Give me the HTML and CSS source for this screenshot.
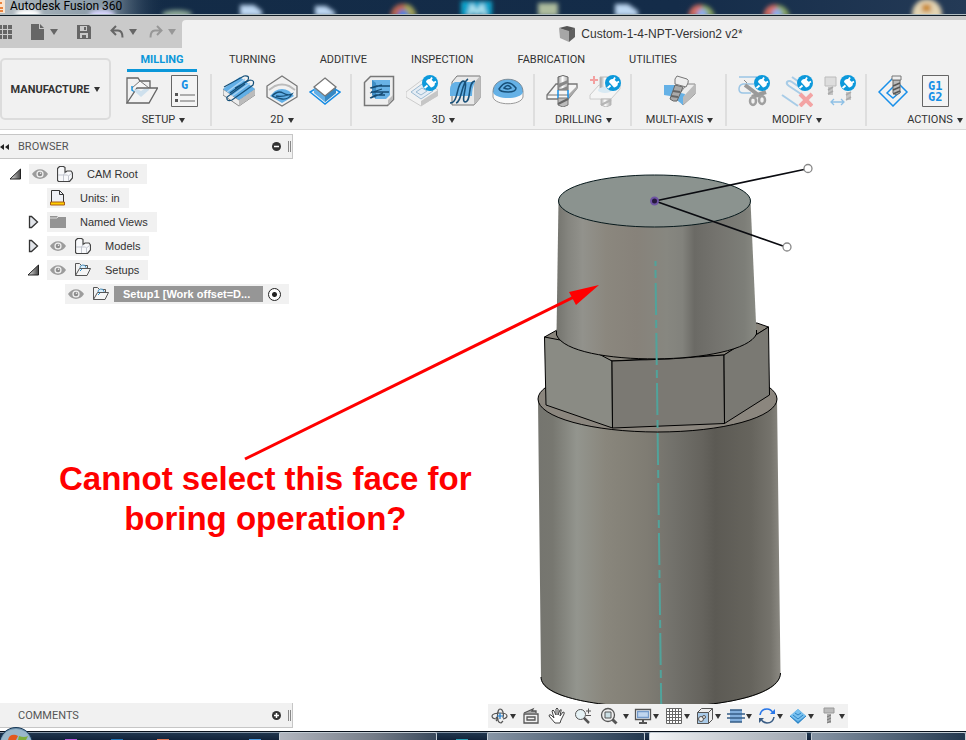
FILE: index.html
```html
<!DOCTYPE html>
<html lang="en">
<head>
	<meta charset="UTF-8">
	<meta name="viewport" content="width=device-width, initial-scale=1.0">
	<title>Autodesk Fusion 360</title>
	<link rel="stylesheet" href="styles.css">
</head>
<body>

<!-- shared symbols -->
<svg class="defs" width="0" height="0">
	<symbol id="plug" viewBox="0 0 16 16">
		<circle cx="8" cy="8" r="8" fill="#0d99db"/>
		<path d="M2.500 13l3-2.500" stroke="#fff" stroke-width="2"/>
		<path d="M4 7l5 5.500c3-.5 4.500-2.500 3.500-5L8.500 4C6 3.500 4 5 4 7z" fill="#fff"/>
		<path d="M8.500 5l1.500-2.500M11.500 8l2.500-1.500" stroke="#fff" stroke-width="1.800"/>
	</symbol>
	<symbol id="eye" viewBox="0 0 16 16">
		<path d="M0 8c4-6.500 12-6.500 16 0c-4 6.500-12 6.500-16 0z" fill="#9c9c9c"/>
		<circle cx="8" cy="8" r="3.600" fill="#f1f1f1"/>
		<circle cx="8" cy="8" r="2.300" fill="#8c8c8c"/>
		<circle cx="8.500" cy="7.300" r=".8" fill="#eee"/>
	</symbol>
	<symbol id="cubes" viewBox="0 0 16 16">
		<path d="M.5 2.500L2.500.5h4l1.500 1v5l2-1.500h4l1.500 2V12l-3 3.500H1.500l-1-1z" fill="#f8f9fb" stroke="#444" stroke-width="1.200"/>
		<path d="M1 9h5.500v6M6.500 9L8 6.500M6.500 9h4l1 1v5M11.500 10l3.500-3" fill="none" stroke="#c3c7d0"/>
	</symbol>
	<symbol id="setup" viewBox="0 0 16 16">
		<path d="M.5 13.500v-12h4l2 2h6v3" fill="none" stroke="#555"/>
		<path d="M5 6.500a3 3 0 0 1 6-1l1 1" fill="#dceefa" stroke="#4b91bd"/>
		<path d="M.5 13.500l4-7h11l-3.500 7z" fill="#f5f5f5" stroke="#555"/>
		<path d="M5 9l2-2" stroke="#2993d1"/>
	</symbol>
	<symbol id="open" viewBox="0 0 20 16">
		<path d="M1 13h10.500V3z" fill="url(#tri)" stroke="#222"/>
	</symbol>
	<symbol id="closed" viewBox="0 0 20 16">
		<path d="M2.500 2.500h2l6 5.500l-6 5.500h-2z" fill="#e2e5ea" stroke="#333" stroke-width="1.300"/>
	</symbol>
	<defs>
		<linearGradient id="tri"><stop offset="0" stop-color="#eee"/><stop offset="1" stop-color="#444"/></linearGradient>
		<linearGradient id="metal"><stop offset="0" stop-color="#999"/><stop offset=".45" stop-color="#fff"/><stop offset="1" stop-color="#aaa"/></linearGradient>
	</defs>
</svg>

<header class="titlebar">
	<svg class="wallpaper" width="100%" height="14">
		<defs>
			<filter id="soft"><feGaussianBlur stdDeviation="2"/></filter>
			<linearGradient id="haze"><stop offset="0" stop-color="#b2bbc1"/><stop offset=".65" stop-color="#8798a5"/><stop offset="1" stop-color="#18304a" stop-opacity="0"/></linearGradient>
		</defs>
		<rect width="165" height="14" fill="url(#haze)"/>
		<g filter="url(#soft)">
			<ellipse cx="28" cy="14" rx="13" ry="5" fill="#fff"/>
			<ellipse cx="102" cy="15" rx="13" ry="5" fill="#d9d6ff"/>
			<ellipse cx="177" cy="14" rx="15" ry="4" fill="#8da897"/>
			<path d="M240 16V5h14l8 6v5zM315 16V6h11l9 6v4zM615 16V4h13l10 7v5z" fill="#bdd7f2"/>
			<path d="M390 16c2-9 8-13 15-12v12z" fill="#bc654f"/><path d="M405 16V4c7 0 10 6 12 12z" fill="#a5a458"/><circle cx="403" cy="15" r="5" fill="#4a80e0"/>
			<path d="M461 1h31v15h-31z" fill="#10a3cb"/><path d="M469 16l3-10l5 7l5-7l3 10" fill="none" stroke="#c4edf4" stroke-width="3"/>
			<path d="M538 3h20v13h-20z" fill="#adbc9d"/>
			<path d="M688 16c2-10 9-13 15-11v11z" fill="#d46c60"/><path d="M702 16V5c7 0 11 5 13 11z" fill="#8eaa62"/><circle cx="702" cy="14" r="5" fill="#8faeed"/>
			<path d="M763 16c2-10 9-13 15-11v11z" fill="#d46c60"/><path d="M777 16V5c7 0 11 5 13 11z" fill="#8eaa62"/><circle cx="777" cy="14" r="5" fill="#8faeed"/>
			<circle cx="927" cy="14" r="15" fill="#e3d4b2"/><path d="M922 4h9v8h-9z" fill="#ca8b35"/>
		</g>
		<path d="M0 0h5v13H0z" fill="#fae4ce"/><path d="M0 3h2M0 8h3M0 11h3" stroke="#e8833e" stroke-width="2"/>
	</svg>
	<span class="app-name">Autodesk Fusion 360</span>
</header>

<div class="topbar">
	<div class="quick">
		<button aria-label="Data panel"><svg width="12" height="14" fill="#666"><path d="M-2 0h4v4h-4zM3 0h4v4H3zM8 0h4v4H8zM-2 5h4v4h-4zM3 5h4v4H3zM8 5h4v4H8zM-2 10h4v4h-4zM3 10h4v4H3zM8 10h4v4H8z"/></svg></button>
		<button aria-label="File"><svg width="14" height="16"><path d="M0 0h8v5h5v11H0z" fill="#666"/><path d="M9 0l4 4H9z" fill="#666"/></svg><i class="caret"></i></button>
		<button aria-label="Save"><svg width="14" height="14"><path d="M0 0h12l2 2v12H0z" fill="#666"/><path d="M3 1h7v5H3zM3 8h8v5H3z" fill="#cacaca"/><path d="M7 2h2v3H7zM5 10h4v3H5z" fill="#666"/></svg></button>
		<div class="history">
			<button aria-label="Undo"><svg width="14" height="14" fill="none" stroke="#666" stroke-width="2"><path d="M6 1L1.500 5.500L6 10M2 5.500h6q4.500 0 4.500 7"/></svg><i class="caret"></i></button>
			<button class="faded" aria-label="Redo"><svg width="14" height="14" fill="none" stroke="#666" stroke-width="2"><path d="M8 1l4.500 4.500L8 10M12 5.500H6q-4.500 0-4.500 7"/></svg><i class="caret"></i></button>
		</div>
	</div>
	<div class="doc">
		<svg width="16" height="16"><path d="M0 2l8-2l8 2l-6 4z" fill="#555"/><path d="M0 2l10 3v11L1 12z" fill="#a6a6a6"/><path d="M16 2l-6 3v11l6-5z" fill="#606060"/></svg>
		<span>Custom-1-4-NPT-Version2 v2*</span>
	</div>
</div>

<div class="ribbon">
	<button class="workspace">MANUFACTURE<i class="caret"></i></button>
	<div class="ribbon-main">
		<nav class="tabs">
			<a class="tab active" href="#">MILLING</a>
			<a class="tab" href="#">TURNING</a>
			<a class="tab" href="#">ADDITIVE</a>
			<a class="tab" href="#">INSPECTION</a>
			<a class="tab" href="#">FABRICATION</a>
			<a class="tab" href="#">UTILITIES</a>
		</nav>
		<div class="groups">
			<section class="group">
				<div class="tools">
					<button aria-label="New setup"><svg viewBox="0 0 32 32"><path d="M1 28V3h11l2 3h10v8" fill="none" stroke="#666" stroke-width="1.300"/><path d="M6 13l8-7l9 7" fill="#f8f8f8" stroke="#777"/><path d="M6 11v4l3 2" stroke="#1e96dd" fill="none" stroke-width="1.500"/><path d="M1 28l10-15h20.500L23 28z" fill="#f3f3f3" stroke="#666" stroke-width="1.300"/><path d="M7 15l8 7l8-7v-1h-5l-3 2l-4-2z" fill="#cee0ed"/></svg></button>
					<button aria-label="NC program"><svg viewBox="0 0 32 32"><path d="M2.500.5h26v31h-26z" fill="#f4f4f4" stroke="#666"/><text class="g-letter" x="12" y="14">G</text><path d="M6 18h3v3H6zM6 24h3v3H6z" fill="#555"/><path d="M11 20h15M11 26h15" stroke="#666"/></svg></button>
				</div>
				<button class="menu">SETUP<i class="caret"></i></button>
			</section>
			<section class="group">
				<div class="tools">
					<button aria-label="Face"><svg viewBox="0 0 32 32"><path d="M0 14L16 25l16-11v6L16 31L0 20z" fill="#ededed" stroke="#888"/><path d="M16 25l16-11v6L16 31z" fill="#bbb"/><path d="M0 14L17 2l15 12l-16 11z" fill="#62afe6"/><path d="M4 17L22 4M9 21L27 8" stroke="#a9d3f2" stroke-width="1.500"/><path d="M1 12L21 1q6-1 4 4L7 18M12 13L27 5q5 0 3 5L9 25q-6 2-5-3L22 9" fill="none" stroke="#144f78" stroke-width="1.200"/></svg></button>
					<button aria-label="2D adaptive clearing"><svg viewBox="0 0 32 32"><path d="M16 1l15 10v11L16 31L1 22V11z" fill="#f1f1f1" stroke="#777" stroke-width="1.300"/><path d="M3 15l6-4q7-3 14 0l6 4" fill="none" stroke="#bbb" stroke-width="2"/><path d="M4 21l5-5q7-4 14 0l5 5L16 28z" fill="#62afe6"/><path d="M6 21q6-6 11-3t9 1q-4 6-10 5t-10-3M10 21q6 1 12-1" fill="none" stroke="#174f78" stroke-width="1.300"/></svg></button>
					<button aria-label="2D contour"><svg viewBox="0 0 32 32"><path d="M1 17l15 12l15-12l-15-9z" fill="none" stroke="#148be5" stroke-width="1.500"/><path d="M5 12l11 9v6L5 18zM27 12l-11 9v6l11-9z" fill="#62afe6"/><path d="M16 21l11-9v6l-11 9z" fill="#3688c3"/><path d="M16 3l11 9l-11 9L5 12z" fill="#fff" stroke="#777" stroke-width="1.300"/></svg></button>
				</div>
				<button class="menu">2D<i class="caret"></i></button>
			</section>
			<section class="group">
				<div class="tools">
					<button aria-label="Adaptive clearing"><svg viewBox="0 0 32 32"><path d="M1.500 7.500l6-6h23v23l-6 6h-23z" fill="#eee" stroke="#777" stroke-width="1.500"/><path d="M25 30V25l5-5v4z" fill="#bbb"/><path d="M9 5h18v15l-4 4H13L9 20z" fill="#69b2e6"/><path d="M9 5v15l4 4V8z" fill="#3f8ec6"/><path d="M7 13l6-2M13 11h14M8 17h18M7 23l6-3h9M8 13l11-3M7 18l12-4M8 23l12-5" fill="none" stroke="#164b73" stroke-width="1.300"/></svg></button>
					<button aria-label="Pocket clearing"><svg viewBox="0 0 32 32"><path d="M0 17L16 5l16 10v5L15 31L0 22z" fill="#f2f2f2" stroke="#ccc"/><path d="M15 26l17-11v6L15 31z" fill="#c6c6c6"/><path d="M5 17L16 9l11 7l-12 8zM10 17l6-4l5 3l-6 4z" fill="#e5edf5" stroke="#9dbbd2"/></svg><svg class="badge"><use href="#plug"/></svg></button>
					<button aria-label="Steep and shallow"><svg viewBox="0 0 32 32"><path d="M3 7l5-6h23v22l-6 7H3z" fill="#e9e9e9" stroke="#777"/><path d="M25 8l6-7v22l-6 7z" fill="#bcbcbc"/><path d="M1 21V14q0-5 5-7h20q-3 6-3 14z" fill="#65b1e6"/><path d="M1 28c9 0 6-20 13-22c7 0-3 20 2 21c7 0 2-20 10-21M7 28c6-1 5-20 12-24" fill="none" stroke="#174f78" stroke-width="1.500"/></svg></button>
					<button aria-label="Scallop"><svg viewBox="0 0 32 32"><path d="M1 17v5c2 9 28 9 30 0v-5z" fill="#fafafa" stroke="#999"/><path d="M1 17C1 0 31 0 31 17c-2 8-28 8-30 0z" fill="#65b1e6"/><path d="M1 17c0-17 30-17 30 0" fill="none" stroke="#7a8b98"/><path d="M7 14Q15 2 24 13q0 4-8 4t-9-3zM12 13q4-5 7 0q-3 2-7 0z" fill="none" stroke="#174f78" stroke-width="1.500"/></svg></button>
				</div>
				<button class="menu">3D<i class="caret"></i></button>
			</section>
			<section class="group">
				<div class="tools">
					<button aria-label="Drill"><svg viewBox="0 0 32 32"><path d="M1 20L10 9h21v4L22 24H1z" fill="#f5f5f5" stroke="#777" stroke-width="1.300"/><path d="M22 20l9-9v3l-9 10z" fill="#aaa"/><path d="M1 20h21" stroke="#777"/><path d="M12 2q5-3 10 0v13H12z" fill="url(#metal)" stroke="#666"/><path d="M12 9l10-4v3l-10 5zM12 15l10-4v4z" fill="#888"/><path d="M12 15v9M22 15v9" stroke="#168fe6" stroke-width="1.500"/><path d="M12 23h10v7l-5 2l-5-2z" fill="#bbb" stroke="#777"/><path d="M12 29l10-5" stroke="#666" stroke-width="2"/></svg></button>
					<button aria-label="Hole recognition"><svg viewBox="0 0 32 32"><path d="M1 20l9-10h21v4L22 24H1z" fill="#f5f5f5" stroke="#ccc"/><path d="M11 2h10v13H11zM12 24h10v6l-5 2l-5-2z" fill="url(#metal)" stroke="#bbb"/><path d="M12 30l10-5M12 15l9-5" stroke="#b5b5b5" stroke-width="2"/><ellipse cx="16" cy="15" rx="7" ry="3" fill="#d8e9f3"/><path d="M1 5h8M5 1v8" stroke="#f3a0a0" stroke-width="2"/></svg><svg class="badge"><use href="#plug"/></svg></button>
				</div>
				<button class="menu">DRILLING<i class="caret"></i></button>
			</section>
			<section class="group">
				<div class="tools">
					<button aria-label="Multi-axis contour"><svg viewBox="0 0 32 32"><path d="M0 10h12v12L0 20z" fill="#65b1e6"/><path d="M14 21L23 9h8v10L19 30z" fill="#ededed" stroke="#888"/><path d="M13 17l8 2l-2 11l-10-8z" fill="#65b1e6"/><path d="M19 30V22L31 9v10z" fill="#bbb"/><path d="M11 10l8 2l-6 14q-4 1-7-2z" fill="#aaa" stroke="#666"/><path d="M9 16l7 1M7 21l7 1" stroke="#666" stroke-width="2"/><path d="M13 1l10 3q2 1 1 4l-2 4l-11-3q-1-6 2-8z" fill="#eee" stroke="#777"/></svg></button>
				</div>
				<button class="menu">MULTI-AXIS<i class="caret"></i></button>
			</section>
			<section class="group">
				<div class="tools">
					<button aria-label="Trim"><svg viewBox="0 0 32 32"><path d="M1 2h18M16 9H5q-4 1-4 5t4 4h8" fill="none" stroke="#9bc5e5" stroke-width="1.500"/><path d="M6 5l3 3" stroke="#888"/><path d="M7 10l16 12M28 17l-14 5" stroke="#9a9a9a" stroke-width="4"/><g fill="none" stroke="#a0a0a0" stroke-width="2.500"><ellipse cx="15" cy="26" rx="3" ry="4"/><ellipse cx="24" cy="25" rx="3" ry="4"/></g></svg><svg class="badge"><use href="#plug"/></svg></button>
					<button aria-label="Delete passes"><svg viewBox="0 0 32 32"><path d="M11 2l7 5M1 20l16 11M20 19L8 11q-3-2-2-4q2-2 5 0l10 7" fill="none" stroke="#a8cce7" stroke-width="2"/><path d="M19 19l12 12M31 19L19 31" stroke="#f3a4a4" stroke-width="4"/></svg><svg class="badge"><use href="#plug"/></svg></button>
					<button aria-label="Replace tool"><svg viewBox="0 0 32 32"><path d="M1 2h11v9H1z" fill="#ddd" stroke="#bbb"/><path d="M4 12h5v8H4zM22 17h5v8h-5z" fill="#c4c4c4"/><path d="M4 15l5-3M4 19l5-3M22 20l5-3M22 25l5-3" stroke="#aaa" stroke-width="1.500"/><path d="M7 27h13M10 24l-3 3l3 3M17 24l3 3l-3 3" fill="none" stroke="#8ec0e5" stroke-width="1.300"/></svg><svg class="badge"><use href="#plug"/></svg></button>
				</div>
				<button class="menu">MODIFY<i class="caret"></i></button>
			</section>
			<section class="group last">
				<div class="tools">
					<button aria-label="Simulate"><svg viewBox="0 0 32 32"><path d="M1 17L15 3l14 14l-14 14zM9 18l7-7l6 6l-7 6z" fill="none" stroke="#178fea" stroke-width="1.500"/><path d="M15 5h7v13l-4 2l-3-2z" fill="#bbb" stroke="#666"/><path d="M15 11l7-3M15 15l7-3M15 19l7-3" stroke="#555" stroke-width="1.500"/><path d="M14 1h9v4h-9z" fill="#eee" stroke="#777"/></svg></button>
					<button aria-label="Post process"><svg viewBox="0 0 32 32"><path d="M1.500.5h26v31h-26z" fill="#f4f4f4" stroke="#666"/><text class="g-letter" x="7" y="15">G1</text><text class="g-letter" x="7" y="26">G2</text></svg></button>
				</div>
				<button class="menu">ACTIONS<i class="caret"></i></button>
			</section>
		</div>
	</div>
</div>

<main class="canvas">
	<!-- model, work axes and arrow -->
	<svg class="model" width="100%" height="100%">
		<defs>
			<linearGradient id="neck">
				<stop offset="0" stop-color="#74746e"/><stop offset=".06" stop-color="#85857f"/><stop offset=".13" stop-color="#92928c"/><stop offset=".25" stop-color="#8b877e"/><stop offset=".4" stop-color="#87827a"/><stop offset=".55" stop-color="#878780"/><stop offset=".63" stop-color="#82827c"/><stop offset=".69" stop-color="#6b6a65"/><stop offset=".8" stop-color="#74736e"/><stop offset=".94" stop-color="#7d7e78"/><stop offset="1" stop-color="#8a8b84"/>
			</linearGradient>
			<linearGradient id="base">
				<stop offset="0" stop-color="#75756f"/><stop offset=".06" stop-color="#777770"/><stop offset=".16" stop-color="#93958e"/><stop offset=".28" stop-color="#89867c"/><stop offset=".45" stop-color="#7f7c73"/><stop offset=".55" stop-color="#73726c"/><stop offset=".68" stop-color="#65635d"/><stop offset=".73" stop-color="#5c5a54"/><stop offset=".88" stop-color="#66645d"/><stop offset=".96" stop-color="#75736c"/><stop offset="1" stop-color="#8b8982"/>
			</linearGradient>
		</defs>
		<g transform="translate(0 -130)">
			<path d="M538 399L541 678C541 718 780 718 780.500 674L777 397z" fill="url(#base)"/>
			<path d="M541 677C541 718 780 718 780.500 673" fill="none" stroke="#000"/>
			<ellipse cx="657.500" cy="399" rx="119.500" ry="33" fill="#8b867e" stroke="#000"/>
			<path d="M544.500 337L557 330L757 323L768.500 327L724 355L612 361z" fill="#88847b" stroke="#000"/>
			<path d="M544.500 337Q580 342 612 361L612.500 428L546 405z" fill="#8a8b84" stroke="#000"/>
			<path d="M612 361Q670 360 724 355L724.500 423.500L612.500 428z" fill="#7b7973" stroke="#000"/>
			<path d="M724 355L768.500 327L769.500 395L724.500 423.500z" fill="#7a7973" stroke="#000"/>
			<path d="M558.500 201L556.500 335C570 368 742 366 756.500 334L750.500 201z" fill="url(#neck)"/>
			<path d="M556.500 331V335C570 368 742 366 756.500 334V330" fill="none" stroke="#000"/>
			<ellipse cx="654.500" cy="201" rx="96" ry="26" fill="#8b938f" stroke="#07191c"/>
			<path d="M655.500 261V266" stroke="#51a39b" stroke-width="2"/>
			<path d="M655.500 270L661.500 728" stroke="#51a39b" stroke-width="2" stroke-dasharray="8 5 32 5"/>
			<path d="M655 201L804 169.500M655 201L783 246" stroke="#0a0b10" stroke-width="1.700"/>
			<g fill="#fff" stroke="#888" stroke-width="1.300"><circle cx="808" cy="168.500" r="4"/><circle cx="787" cy="247" r="4"/></g>
			<circle cx="654.500" cy="201" r="3.500" fill="#25173d" stroke="#6e53a3" stroke-width="2"/>
			<path d="M245 459L580 294" stroke="#f00" stroke-width="3"/>
			<path d="M599 285L569 292L576 305z" fill="#f00"/>
		</g>
	</svg>
	<p class="note">Cannot select this face for<br>boring operation?</p>

	<aside class="browser">
		<div class="panel-head">
			<svg width="9" height="8"><path d="M4 1v6L0 4zM9 1v6L5 4z" fill="#222"/></svg>
			<h2>BROWSER</h2>
			<button aria-label="Collapse"><svg width="9" height="9"><circle cx="4.500" cy="4.500" r="4.500" fill="#333"/><path d="M2 4.500h5" stroke="#fff" stroke-width="1.500"/></svg></button>
			<i class="grip"></i>
		</div>
		<ul class="tree">
			<li>
				<div class="row"><svg class="toggle"><use href="#open"/></svg><div class="node"><svg><use href="#eye"/></svg><svg><use href="#cubes"/></svg><span>CAM Root</span></div></div>
				<ul>
					<li><div class="row"><i class="toggle"></i><div class="node"><svg><path d="M1.500 12V.5h8l4 4V12" fill="#eef0f5" stroke="#333"/><path d="M9.500.5v4h4" fill="none" stroke="#333"/><path d="M.5 12h14v3H.5z" fill="#ffce00" stroke="#a95b16"/></svg><span>Units: in</span></div></div></li>
					<li><div class="row"><svg class="toggle"><use href="#closed"/></svg><div class="node"><svg><path d="M0 2h7l1 1h8v11H0z" fill="#949494"/><path d="M0 4h7l1-1" stroke="#ddd" fill="none"/></svg><span>Named Views</span></div></div></li>
					<li><div class="row"><svg class="toggle"><use href="#closed"/></svg><div class="node"><svg><use href="#eye"/></svg><svg><use href="#cubes"/></svg><span>Models</span></div></div></li>
					<li>
						<div class="row"><svg class="toggle"><use href="#open"/></svg><div class="node"><svg><use href="#eye"/></svg><svg><use href="#setup"/></svg><span>Setups</span></div></div>
						<ul>
							<li><div class="row"><i class="toggle"></i><div class="node selected"><svg><use href="#eye"/></svg><svg><use href="#setup"/></svg><label for="setup1">Setup1 [Work offset=D...</label><input type="radio" id="setup1" checked></div></div></li>
						</ul>
					</li>
				</ul>
			</li>
		</ul>
	</aside>

	<footer class="bottom">
		<div class="panel-head comments">
			<h2>COMMENTS</h2>
			<button aria-label="Expand"><svg width="9" height="9"><circle cx="4.500" cy="4.500" r="4.500" fill="#333"/><path d="M2 4.500h5M4.500 2v5" stroke="#fff" stroke-width="1.500"/></svg></button>
			<i class="grip"></i>
		</div>
		<div class="navbar">
			<button aria-label="Orbit"><svg viewBox="0 0 18 18" fill="none" stroke="#555" stroke-width="1.200"><path d="M12 12q4-1 4-3c0-2-3-3-7-3S1 7 1 9s2 3 5 3M10 16c-5 0-4-14-1-14c3 0 4 5 3 9M5 10l2 2l-2 2M12 14l-2 2"/><path d="M9 6v6M6 9h6" stroke="#187acc"/></svg><i class="caret"></i></button>
			<button class="plain" aria-label="Look at"><svg viewBox="0 0 18 18" fill="none" stroke="#555" stroke-width="1.300"><path d="M2 7h14v9H2zM5 10h8v3H5z"/><path d="M2 6l9-4l-1 2h4v2" fill="#aaa"/></svg></button>
			<button class="plain" aria-label="Pan"><svg viewBox="0 0 18 18"><path d="M7 16L1 9q0-2 2-1l3 3L4 4q1-2 2 0l2 4V2q1-2 2 0v6l2-5q2-1 1 1l-1 5l3-4q2 0 1 2l-3 6l-1 3z" fill="#fff" stroke="#444"/></svg></button>
			<button class="plain" aria-label="Zoom"><svg viewBox="0 0 18 18" fill="none" stroke="#555"><circle cx="6.500" cy="7.500" r="5" fill="#e6f2f5"/><path d="M10 11l5 5" stroke-width="2.500"/><path d="M12 4h5M14.500 1.500v5M12 8.500h5"/></svg></button>
			<button class="wide" aria-label="Fit"><svg viewBox="0 0 18 18" fill="none" stroke="#555"><circle cx="8" cy="8" r="6.500" fill="#eee" stroke-width="1.300"/><path d="M5 5h6v6H5z" fill="#cbdfe4"/><path d="M12.500 12.500l4 4" stroke-width="3"/></svg><i class="caret"></i></button>
			<button aria-label="Display settings"><svg viewBox="0 0 18 18" fill="none" stroke="#555" stroke-width="1.300"><path d="M1.500 2.500h15v10h-15z" fill="#fff"/><path d="M3.500 4.500h11v6h-11z" fill="#c0d6ef" stroke="#759bcb"/><path d="M9 13v3M5 16h8" stroke-width="2"/></svg><i class="caret"></i></button>
			<button aria-label="Grid and snaps"><svg viewBox="0 0 18 18" fill="#fff" stroke="#666"><path d="M1.500 1.500h15v15h-15zM4.500 1v16M7.500 1v16M10.500 1v16M13.500 1v16M1 4.500h16M1 7.500h16M1 10.500h16M1 13.500h16"/></svg><i class="caret"></i></button>
			<button aria-label="Viewports"><svg viewBox="0 0 18 18" fill="#eee" stroke="#555"><path d="M1.500 5.500l4-4h11v11l-4 4h-11z"/><path d="M1.500 5.500h11v11h-11z" fill="#a9cae8"/><path d="M12.500 5.500l4-4" fill="none"/><circle cx="5" cy="12" r="2.500"/><circle cx="8" cy="10" r="1.500"/></svg><i class="caret"></i></button>
			<button aria-label="Passes"><svg viewBox="0 0 18 18" stroke="#365e87" stroke-width="1.500"><path d="M3 3h12v12H3z" fill="#81aedc" stroke="none"/><path d="M3 3h12M0 7h18M0 11h18M3 15h12"/></svg><i class="caret"></i></button>
			<button aria-label="Regenerate"><svg viewBox="0 0 18 18" fill="none" stroke="#2876e8" stroke-width="1.500"><path d="M2 8q1-6 7-6q4 0 6 4"/><path d="M17 2v5h-5z" fill="#2876e8" stroke="none"/><path d="M16 10q-1 6-7 6q-4 0-6-4" stroke="#395c84"/><path d="M1 16v-5h5z" fill="#395c84" stroke="none"/></svg><i class="caret"></i></button>
			<button aria-label="Stock"><svg viewBox="0 0 18 18"><path d="M1 9l8-7l8 7l-8 8z" fill="#4c9fdc"/><path d="M9 2l8 7l-8 5l-8-5z" fill="#79c1ef"/><path d="M1 9l8 7l8-7M4 8l5 4l5-4M6 6l3 2l3-2" fill="none" stroke="#2d84c4"/></svg><i class="caret"></i></button>
			<button aria-label="Tool"><svg viewBox="0 0 18 18"><path d="M4 1h10v5H4z" fill="#bbb" stroke="#999"/><path d="M7 7h4v9H7z" fill="#aaa"/><path d="M7 10l4-2M7 13l4-2M7 16l4-2" stroke="#777"/></svg><i class="caret"></i></button>
		</div>
	</footer>
</main>

<div class="taskbar">
	<svg class="orb" width="34" height="13"><circle cx="16" cy="17" r="16.500" fill="#6e92ad" stroke="#173857"/><path d="M1 13Q5 2 16 2t15 11z" fill="#9ab7ca"/><path d="M8 13q1-6 8-5l2 1l-2 4z" fill="#e4581e"/><path d="M19 9q5 2 9 0l-2 4h-8z" fill="#7eae3b"/></svg>
	<div class="pins">
		<i class="pin purple"></i><i class="pin blue"></i><i class="pin orange"></i><i class="pin sky"></i>
	</div>
	<div class="task silver"></div>
	<div class="gap"><i class="pin teal"></i></div>
	<div class="task dark"></div>
	<div class="task bright"></div>
	<div class="task dark last-task"></div>
</div>

</body>
</html>
```

FILE: styles.css
```css
* {
	box-sizing: border-box;
}

body {
	margin: 0;
	min-height: 100vh;
	display: flex;
	flex-direction: column;
	background: #fff;
	color: #333;
	font-family: "Liberation Sans", Arial, sans-serif;
	font-size: 11px;
	overflow: hidden;
}

button {
	display: flex;
	align-items: center;
	padding: 0;
	border: 0;
	background: none;
	color: inherit;
	font: inherit;
}

svg {
	display: block;
	flex-shrink: 0;
}

.defs {
	position: absolute;
}

.caret {
	border: solid transparent;
	border-width: 5px 3px 0;
	border-top-color: #333;
	flex-shrink: 0;
}

/* window title */
.titlebar {
	position: relative;
	height: 16px;
	border-bottom: 1px solid #101c26;
	background: linear-gradient(90deg, #132b46, #142c49 70%, #243a56);
	box-shadow: inset 0 -1px #aebbc0;
}

.wallpaper {
	position: absolute;
	top: 0;
	left: 0;
}

.app-name {
	position: relative;
	display: block;
	padding-left: 10px;
	color: #000;
	font-family: Roboto, sans-serif;
	font-size: 12px;
	line-height: 12px;
}

/* quick access and document tab */
.topbar {
	display: flex;
	height: 32px;
	background: #cacaca;
}

.quick {
	display: flex;
	align-items: center;
	gap: 19px;
	width: 182px;
}

.quick button {
	gap: 5px;
}

.quick .caret {
	border-width: 6px 4px 0;
	border-top-color: #666;
}

.history {
	display: flex;
	gap: 12px;
}

.faded {
	opacity: .5;
}

.doc {
	flex: 1;
	display: flex;
	align-items: center;
	justify-content: center;
	gap: 6px;
	margin-top: 4px;
	padding-left: 154px;
	border-top-left-radius: 4px;
	background: #f1f1f1;
	font-size: 12px;
}

/* ribbon */
.ribbon {
	display: flex;
	height: 82px;
	border-bottom: 1px solid #d8d8d8;
	background: #f1f1f1;
	font-family: Roboto, sans-serif;
	overflow: hidden;
}

.workspace {
	flex-shrink: 0;
	justify-content: center;
	gap: 5px;
	width: 111px;
	height: 62px;
	margin-top: 10px;
	border: 2px solid #dcdcdc;
	border-radius: 5px;
	font-weight: bold;
}

.tabs {
	display: flex;
	gap: 20px;
	padding-left: 16px;
}

.tab {
	height: 24px;
	padding: 4px 12px 0;
	color: #333;
	line-height: 15px;
	text-align: center;
	text-decoration: none;
}

.tab.active {
	min-width: 70px;
	border-bottom: 3px solid #0b97d9;
	color: #0b97d9;
	font-weight: bold;
}

.groups {
	display: flex;
	padding-top: 2px;
	padding-left: 4px;
}

.group {
	display: flex;
	flex-direction: column;
	align-items: center;
	flex-shrink: 0;
	min-width: 95px;
	height: 52px;
	padding: 0 9px 0 11px;
	border-right: 2px solid #dedede;
}

.group.last {
	width: 134px;
	border: 0;
}

.tools {
	display: flex;
	gap: 11px;
	padding-top: 1px;
}

.last .tools {
	align-self: flex-start;
}

.tools button {
	position: relative;
	width: 32px;
	height: 32px;
}

.tools svg {
	width: 32px;
	height: 32px;
}

.tools .badge {
	position: absolute;
	top: 0;
	right: 0;
	width: 16px;
	height: 16px;
}

.g-letter {
	fill: #168fe6;
	font-family: "DejaVu Sans Mono", monospace;
	font-size: 12px;
	font-weight: bold;
}

.menu {
	gap: 4px;
	margin-top: 6px;
	line-height: 14px;
}

/* drawing area */
.canvas {
	position: relative;
	flex: 1;
	display: flex;
	flex-direction: column;
	justify-content: space-between;
	padding-top: 4px;
}

.model {
	position: absolute;
	top: 0;
	left: 0;
}

.note {
	position: absolute;
	top: 329px;
	left: 59px;
	margin: 0;
	color: #f00;
	font-size: 33px;
	font-weight: bold;
	line-height: 40px;
	text-align: center;
}

.browser,
.bottom {
	position: relative;
}

.browser {
	width: 293px;
}

.panel-head {
	display: flex;
	align-items: center;
	height: 25px;
	border: 1px solid #c6c6c6;
	border-left: 0;
	background: #f1f1f1;
	color: #555;
}

.panel-head h2 {
	flex: 1;
	margin: 0;
	padding-left: 9px;
	font-family: Roboto, sans-serif;
	font-size: 11px;
	font-weight: normal;
}

.grip {
	width: 3px;
	height: 11px;
	margin: 0 1px 0 7px;
	border: solid #888;
	border-width: 0 1px;
}

.comments {
	width: 293px;
	border-top: 0;
}

.comments h2 {
	padding-left: 18px;
}

.tree {
	padding: 5px 0 0 9px;
}

.tree,
.tree ul {
	margin: 0;
	list-style: none;
}

.tree ul {
	padding-left: 18px;
}

.row {
	display: flex;
	margin-bottom: 4px;
}

.toggle {
	width: 20px;
	height: 20px;
}

.node {
	display: flex;
	align-items: center;
	gap: 9px;
	height: 20px;
	padding: 0 9px 0 3px;
	background: #f1f1f1;
}

.node svg {
	width: 16px;
	height: 16px;
}

.node span {
	padding-left: 5px;
}

.selected {
	gap: 5px;
	padding-right: 8px;
}

.selected svg + svg {
	margin-left: 4px;
}

.selected label {
	width: 149px;
	padding-left: 9px;
	background: #969696;
	color: #fff;
	font-weight: bold;
	line-height: 16px;
	white-space: nowrap;
}

.selected input {
	appearance: none;
	width: 13px;
	height: 13px;
	margin: 0;
	border: 1px solid #222;
	border-radius: 50%;
	background: radial-gradient(#222 2px, #fff 3px);
}

.bottom {
	display: flex;
	align-items: flex-start;
	justify-content: space-between;
	padding-bottom: 3px;
}

.navbar {
	display: flex;
	height: 24px;
	margin: 1px 118px 0 0;
	background: #f1f1f1;
}

.navbar button {
	width: 31px;
	padding-left: 3px;
	gap: 1px;
}

.navbar .plain {
	width: 26px;
}

.navbar .wide {
	width: 34px;
	gap: 5px;
}

.navbar svg {
	width: 18px;
	height: 18px;
}

/* top edge of the desktop taskbar */
.taskbar {
	position: relative;
	display: flex;
	height: 9px;
	border-top: 1px solid #08111c;
	background: linear-gradient(#8797a8 1px, #20364e 1px, #12233a);
}

.orb {
	position: absolute;
	bottom: 0;
	left: 0;
}

.pins {
	display: flex;
	align-items: flex-end;
	gap: 34px;
	width: 279px;
	padding-left: 65px;
}

.pin {
	width: 12px;
	height: 1px;
}

.purple { background: #b45ad8; }
.blue { background: #1f76b8; }
.orange { background: #dc7756; }
.sky { margin-left: 46px; background: #4a9be0; }
.teal { background: #2b9fb5; }

.task {
	width: 158px;
	margin-right: 4px;
	border: 1px solid #c3ccd4;
	border-bottom: 0;
	border-radius: 2px 2px 0 0;
}

.silver {
	margin-right: 0;
	background: linear-gradient(90deg, #b2b6bf, #747c88 60%, #39495c);
}

.gap {
	display: flex;
	align-items: flex-end;
	width: 50px;
	padding-left: 19px;
}

.dark {
	background: linear-gradient(90deg, #8795a5, #23384f);
}

.bright {
	background: linear-gradient(90deg, #f3f5f7, #9ca4af);
}

.last-task {
	flex: 1;
	margin-right: 0;
}
```
